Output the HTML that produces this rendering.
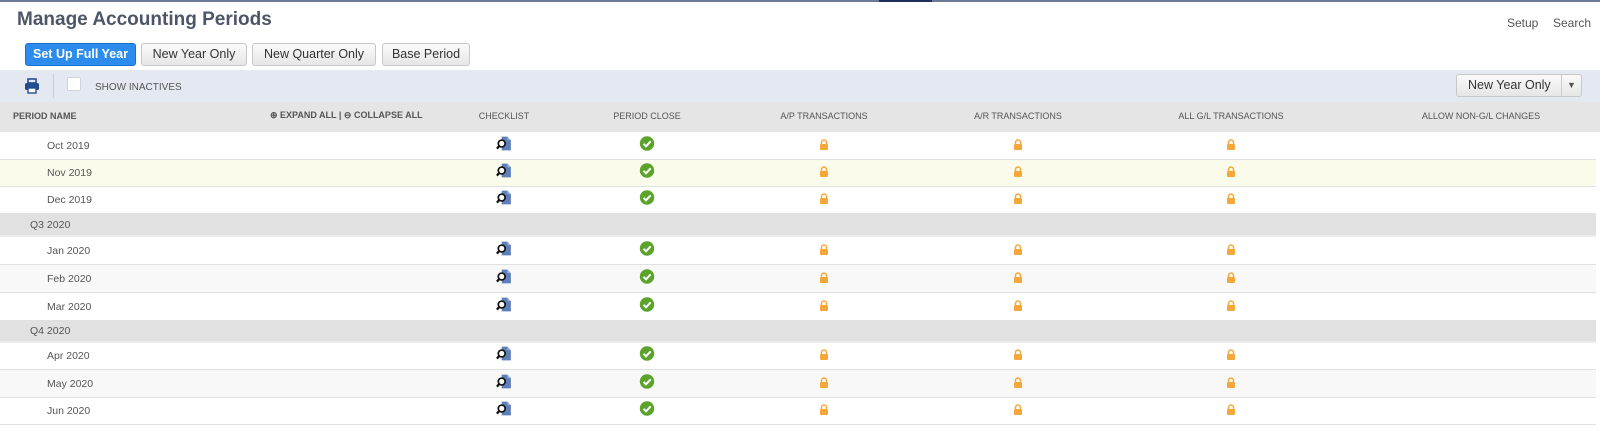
<!DOCTYPE html>
<html><head><meta charset="utf-8"><style>
*{margin:0;padding:0;box-sizing:border-box}
body{width:1600px;height:428px;overflow:hidden;background:#fff;font-family:"Liberation Sans",sans-serif;position:relative;color:#333}
.a{position:absolute}
.topbar{left:0;top:0;width:1600px;height:2px;background:#6b7a96}
.topbar2{left:879px;top:0;width:53px;height:2px;background:#1f2f5c}
h1{position:absolute;left:17px;top:9px;font-size:19px;font-weight:bold;color:#4d5667;letter-spacing:0px}
.tl{top:16px;font-size:12px;color:#555}
.btn{position:absolute;top:43px;height:23px;border:1px solid #c8c8c8;border-radius:3px;background:linear-gradient(#fafafa,#e6e6e6);font-size:12.5px;color:#333;text-align:center;line-height:21px}
.pri{background:#2b8cee;border-color:#1a6fd0;color:#fff;font-weight:bold}
.tool{left:0;top:70px;width:1600px;height:32px;background:#e4e9f1}
.hdr{left:0;top:102px;width:1600px;height:30px;background:#e5e5e5}
.h{position:absolute;top:111px;font-size:9px;color:#555;transform:translateX(-50%);white-space:nowrap}
.row{position:absolute;left:0;width:1596px;border-bottom:1px solid #e0e0e0}
.row span{position:absolute;left:47px;top:50%;transform:translateY(-50%);font-size:10.5px;color:#555}
.grp{background:#e1e1e1;border-bottom:2px solid #ececec}
.grp span{left:30px}
.ic{position:absolute;top:50%;transform:translate(-50%,-50%)}
</style></head><body>
<div class="a topbar"></div><div class="a topbar2"></div>
<h1>Manage Accounting Periods</h1>
<div class="a tl" style="left:1507px">Setup</div>
<div class="a tl" style="left:1553px">Search</div>
<div class="btn pri" style="left:25px;width:111px">Set Up Full Year</div>
<div class="btn" style="left:141px;width:106px">New Year Only</div>
<div class="btn" style="left:252px;width:124px">New Quarter Only</div>
<div class="btn" style="left:382px;width:88px">Base Period</div>
<div class="a tool"></div>
<svg class="a" style="left:24px;top:78px" width="16" height="16" viewBox="0 0 16 16"><rect x="4" y="1" width="8" height="4" fill="none" stroke="#244c8e" stroke-width="1.6"/><rect x="1" y="5" width="14" height="7" rx="1.5" fill="#244c8e"/><rect x="4" y="10" width="8" height="5" fill="#fff" stroke="#244c8e" stroke-width="1.4"/></svg>
<div class="a" style="left:53px;top:74px;width:1px;height:24px;background:#c9cfd9"></div>
<div class="a" style="left:67px;top:77px;width:14px;height:14px;background:#fff;border:1px solid #d0d4da;border-radius:2px"></div>
<div class="a" style="left:95px;top:82px;font-size:10px;color:#555">SHOW INACTIVES</div>
<div class="btn" style="left:1456px;top:74px;width:126px;height:23px;line-height:21px;font-size:12.5px;text-align:left;padding-left:11px">New Year Only<span style="position:absolute;left:104px;top:0;width:1px;height:21px;background:#ccc"></span><span style="position:absolute;left:110px;font-size:9px;color:#555">▼</span></div>
<div class="a hdr"></div>
<div class="a" style="left:13px;top:111px;font-size:9px;font-weight:bold;color:#555">PERIOD NAME</div>
<div class="a" style="left:270px;top:110px;font-size:9px;font-weight:bold;color:#555">⊕ EXPAND ALL | ⊖ COLLAPSE ALL</div>
<div class="h" style="left:504px">CHECKLIST</div>
<div class="h" style="left:647px">PERIOD CLOSE</div>
<div class="h" style="left:824px">A/P TRANSACTIONS</div>
<div class="h" style="left:1018px">A/R TRANSACTIONS</div>
<div class="h" style="left:1231px">ALL G/L TRANSACTIONS</div>
<div class="h" style="left:1481px">ALLOW NON-G/L CHANGES</div>
<div id="rows"></div>
<script>
var R=[["Oct 2019",132,160,0],["Nov 2019",160,187,0,"#fbfbec"],["Dec 2019",187,214,0],["Q3 2020",214,237,1],["Jan 2020",237,265,0],["Feb 2020",265,293,0,"#f8f8f8"],["Mar 2020",293,321,0],["Q4 2020",321,343,1],["Apr 2020",343,370,0],["May 2020",370,398,0,"#f8f8f8"],["Jun 2020",398,425,0]];
var doc='<svg width="16" height="16" viewBox="0 0 14 14"><path d="M5 1h5l3 3v9H5z" fill="#5f7fb8"/><path d="M10 1v3h3" fill="#9fb4d8"/><circle cx="5" cy="7" r="3" fill="#fff" stroke="#111" stroke-width="1.5"/><path d="M3 9L0.8 11.5" stroke="#111" stroke-width="2"/></svg>';
var chk='<svg width="15" height="15" viewBox="0 0 15 15"><circle cx="7.5" cy="7.5" r="7.2" fill="#5ba32b"/><path d="M4 7.8l2.5 2.5 4.7-5" fill="none" stroke="#fff" stroke-width="2"/></svg>';
var lk='<svg width="9" height="11" viewBox="0 0 9 11"><path d="M2 5V3.5a2.5 2.5 0 015 0V5" fill="none" stroke="#f5a83a" stroke-width="1.5"/><rect x="0.5" y="5" width="8" height="6" rx="1" fill="#f5a83a"/></svg>';
var h='';
R.forEach(function(r){
 var st='top:'+r[1]+'px;height:'+(r[2]-r[1])+'px;'+(r[4]?'background:'+r[4]+';':'');
 h+='<div class="row'+(r[3]?' grp':'')+'" style="'+st+'"><span>'+r[0]+'</span>';
 if(!r[3]){h+='<div class="ic" style="left:504px">'+doc+'</div><div class="ic" style="left:647px">'+chk+'</div><div class="ic" style="left:824px">'+lk+'</div><div class="ic" style="left:1018px">'+lk+'</div><div class="ic" style="left:1231px">'+lk+'</div>';}
 h+='</div>';
});
document.getElementById('rows').innerHTML=h;
</script>
</body></html>
